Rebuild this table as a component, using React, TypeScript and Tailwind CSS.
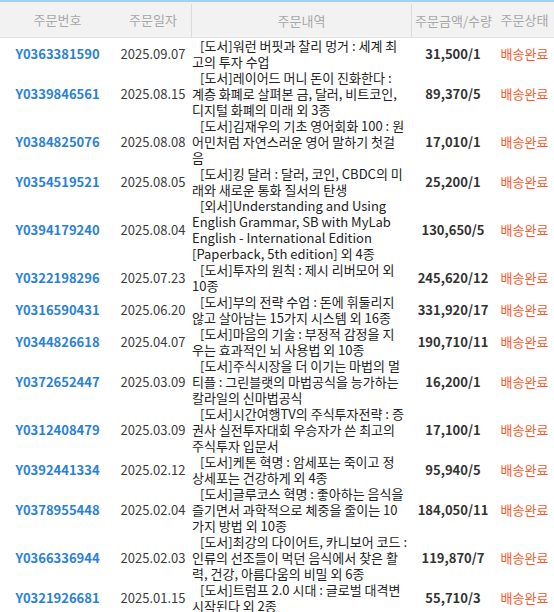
const orders = [
  { no: "Y0363381590", date: "2025.09.07", title: "[도서]워런 버핏과 찰리 멍거 : 세계 최고의 투자 수업", amount: "31,500/1" },
  { no: "Y0339846561", date: "2025.08.15", title: "[도서]레이어드 머니 돈이 진화한다 : 계층 화폐로 살펴본 금, 달러, 비트코인, 디지털 화폐의 미래 외 3종", amount: "89,370/5" },
  { no: "Y0384825076", date: "2025.08.08", title: "[도서]김재우의 기초 영어회화 100 : 원어민처럼 자연스러운 영어 말하기 첫걸음", amount: "17,010/1" },
  { no: "Y0354519521", date: "2025.08.05", title: "[도서]킹 달러 : 달러, 코인, CBDC의 미래와 새로운 통화 질서의 탄생", amount: "25,200/1" },
  { no: "Y0394179240", date: "2025.08.04", title: "[외서]Understanding and Using English Grammar, SB with MyLab English - International Edition [Paperback, 5th edition] 외 4종", amount: "130,650/5" },
  { no: "Y0322198296", date: "2025.07.23", title: "[도서]투자의 원칙 : 제시 리버모어 외 10종", amount: "245,620/12" },
  { no: "Y0316590431", date: "2025.06.20", title: "[도서]부의 전략 수업 : 돈에 휘둘리지 않고 살아남는 15가지 시스템 외 16종", amount: "331,920/17" },
  { no: "Y0344826618", date: "2025.04.07", title: "[도서]마음의 기술 : 부정적 감정을 지우는 효과적인 뇌 사용법 외 10종", amount: "190,710/11" },
  { no: "Y0372652447", date: "2025.03.09", title: "[도서]주식시장을 더 이기는 마법의 멀티플 : 그린블랫의 마법공식을 능가하는 칼라일의 신마법공식", amount: "16,200/1" },
  { no: "Y0312408479", date: "2025.03.09", title: "[도서]시간여행TV의 주식투자전략 : 증권사 실전투자대회 우승자가 쓴 최고의 주식투자 입문서", amount: "17,100/1" },
  { no: "Y0392441334", date: "2025.02.12", title: "[도서]케톤 혁명 : 암세포는 죽이고 정상세포는 건강하게 외 4종", amount: "95,940/5" },
  { no: "Y0378955448", date: "2025.02.04", title: "[도서]글루코스 혁명 : 좋아하는 음식을 즐기면서 과학적으로 체중을 줄이는 10가지 방법 외 10종", amount: "184,050/11" },
  { no: "Y0366336944", date: "2025.02.03", title: "[도서]최강의 다이어트, 카니보어 코드 : 인류의 선조들이 먹던 음식에서 찾은 활력, 건강, 아름다움의 비밀 외 6종", amount: "119,870/7", wide: true },
  { no: "Y0321926681", date: "2025.01.15", title: "[도서]트럼프 2.0 시대 : 글로벌 대격변 시작된다 외 2종", amount: "55,710/3" },
];

const cols = "grid grid-cols-[115px_76px_220px_84px_59px]";

export default function App() {
  return (
    <div
      className="w-[554px] h-[612px] overflow-hidden bg-white text-[13px] leading-[16px]"
      style={{ fontFamily: '"Noto Sans CJK KR", sans-serif' }}
    >
      {/* header */}
      <div className={`${cols} h-[38px] border-t-2 border-[#a6d0ef] border-b border-b-[#e3e3e3] bg-[#f2f2f2] text-[#a8a8a8]`}>
        <div className="flex items-center justify-center">주문번호</div>
        <div className="flex items-center justify-center">주문일자</div>
        <div className="flex items-center justify-center border-l border-[#dcdcdc] mt-[2px]">주문내역</div>
        <div className="flex items-center justify-center border-l border-[#dcdcdc] mt-[2px]">주문금액/수량</div>
        <div className="flex items-center justify-center">주문상태</div>
      </div>

      {/* rows */}
      {orders.map(o => (
        <div key={o.no} className={cols}>
          <div className="flex items-center justify-center font-bold text-[#2a7fdc]">{o.no}</div>
          <div className="flex items-center justify-center text-[#3c3c3c]">{o.date}</div>
          <div className={o.wide ? "pl-px pr-[2px] indent-[8px] text-[#222]" : "pl-px pr-[5px] indent-[8px] text-[#222]"}>{o.title}</div>
          <div className="flex items-center justify-center font-bold text-[#333]">{o.amount}</div>
          <div className="flex items-center justify-center text-[#fa5a2a]">배송완료</div>
        </div>
      ))}
    </div>
  );
}
